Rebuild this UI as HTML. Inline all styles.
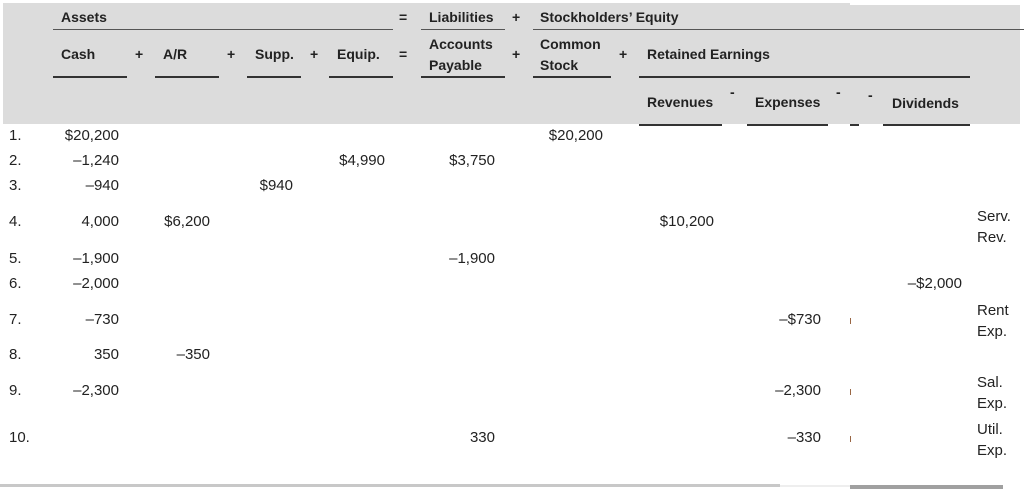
<!DOCTYPE html>
<html><head><style>
body{margin:0;width:1024px;height:493px;background:#fff;position:relative;overflow:hidden;font-family:"Liberation Sans",sans-serif;font-size:14px;color:#222}
.a{position:absolute;white-space:nowrap;line-height:16px}
.b{font-weight:bold;color:#222}
.r{position:absolute;white-space:nowrap;line-height:16px;text-align:right;width:100px;font-size:15px}
.n{font-size:15px}
.l{position:absolute;height:2px;background:#333}
.t{position:absolute;height:1px;background:#555}
</style></head><body>
<div style="position:absolute;left:3px;top:3px;width:847px;height:121px;background:#dcdcdc"></div>
<div style="position:absolute;left:850px;top:5px;width:170px;height:119px;background:#dcdcdc"></div>

<div class="a b" style="left:61px;top:9px">Assets</div>
<div class="a b" style="left:399px;top:9px">=</div>
<div class="a b" style="left:429px;top:9px">Liabilities</div>
<div class="a b" style="left:512px;top:9px">+</div>
<div class="a b" style="left:540px;top:9px">Stockholders’ Equity</div>
<div class="t" style="left:53px;top:29px;width:340px"></div>
<div class="t" style="left:421px;top:29px;width:84px"></div>
<div class="t" style="left:533px;top:29px;width:491px"></div>

<div class="a b" style="left:61px;top:46px">Cash</div>
<div class="a b" style="left:135px;top:46px">+</div>
<div class="a b" style="left:163px;top:46px">A/R</div>
<div class="a b" style="left:227px;top:46px">+</div>
<div class="a b" style="left:255px;top:46px">Supp.</div>
<div class="a b" style="left:310px;top:46px">+</div>
<div class="a b" style="left:337px;top:46px">Equip.</div>
<div class="a b" style="left:399px;top:46px">=</div>
<div class="a b" style="left:429px;top:36px">Accounts</div>
<div class="a b" style="left:429px;top:57px">Payable</div>
<div class="a b" style="left:512px;top:46px">+</div>
<div class="a b" style="left:540px;top:36px">Common</div>
<div class="a b" style="left:540px;top:57px">Stock</div>
<div class="a b" style="left:619px;top:46px">+</div>
<div class="a b" style="left:647px;top:46px">Retained Earnings</div>
<div class="l" style="left:53px;top:76px;width:74px"></div>
<div class="l" style="left:155px;top:76px;width:64px"></div>
<div class="l" style="left:247px;top:76px;width:54px"></div>
<div class="l" style="left:329px;top:76px;width:64px"></div>
<div class="l" style="left:421px;top:76px;width:84px"></div>
<div class="l" style="left:533px;top:76px;width:78px"></div>
<div class="l" style="left:639px;top:76px;width:331px"></div>

<div class="a b" style="left:647px;top:94px">Revenues</div>
<div class="a b" style="left:730px;top:84px">-</div>
<div class="a b" style="left:755px;top:94px">Expenses</div>
<div class="a b" style="left:836px;top:84px">-</div>
<div class="a b" style="left:868px;top:87px">-</div>
<div class="a b" style="left:892px;top:95px">Dividends</div>
<div class="l" style="left:639px;top:124px;width:83px"></div>
<div class="l" style="left:747px;top:124px;width:81px"></div>
<div class="l" style="left:850px;top:124px;width:9px"></div>
<div class="l" style="left:883px;top:124px;width:87px"></div>

<div class="a n" style="left:9px;top:128px">1.</div>
<div class="a n" style="left:9px;top:153px">2.</div>
<div class="a n" style="left:9px;top:178px">3.</div>
<div class="a n" style="left:9px;top:214px">4.</div>
<div class="a n" style="left:9px;top:251px">5.</div>
<div class="a n" style="left:9px;top:276px">6.</div>
<div class="a n" style="left:9px;top:312px">7.</div>
<div class="a n" style="left:9px;top:347px">8.</div>
<div class="a n" style="left:9px;top:383px">9.</div>
<div class="a n" style="left:9px;top:430px">10.</div>

<div class="r" style="left:19px;top:128px">$20,200</div>
<div class="r" style="left:19px;top:153px">–1,240</div>
<div class="r" style="left:19px;top:178px">–940</div>
<div class="r" style="left:19px;top:214px">4,000</div>
<div class="r" style="left:19px;top:251px">–1,900</div>
<div class="r" style="left:19px;top:276px">–2,000</div>
<div class="r" style="left:19px;top:312px">–730</div>
<div class="r" style="left:19px;top:347px">350</div>
<div class="r" style="left:19px;top:383px">–2,300</div>

<div class="r" style="left:110px;top:214px">$6,200</div>
<div class="r" style="left:110px;top:347px">–350</div>
<div class="r" style="left:193px;top:178px">$940</div>
<div class="r" style="left:285px;top:153px">$4,990</div>
<div class="r" style="left:395px;top:153px">$3,750</div>
<div class="r" style="left:395px;top:251px">–1,900</div>
<div class="r" style="left:395px;top:430px">330</div>
<div class="r" style="left:503px;top:128px">$20,200</div>
<div class="r" style="left:614px;top:214px">$10,200</div>
<div class="r" style="left:721px;top:312px">–$730</div>
<div class="r" style="left:721px;top:383px">–2,300</div>
<div class="r" style="left:721px;top:430px">–330</div>
<div class="r" style="left:862px;top:276px">–$2,000</div>

<div style="position:absolute;left:850px;top:318px;width:1px;height:6px;background:#964"></div>
<div style="position:absolute;left:850px;top:389px;width:1px;height:6px;background:#964"></div>
<div style="position:absolute;left:850px;top:436px;width:1px;height:6px;background:#964"></div>

<div class="a n" style="left:977px;top:206px;line-height:21px">Serv.<br>Rev.</div>
<div class="a n" style="left:977px;top:300px;line-height:21px">Rent<br>Exp.</div>
<div class="a n" style="left:977px;top:372px;line-height:21px">Sal.<br>Exp.</div>
<div class="a n" style="left:977px;top:419px;line-height:21px">Util.<br>Exp.</div>

<div style="position:absolute;left:0;top:484px;width:780px;height:3px;background:#c8c8c8"></div>
<div style="position:absolute;left:780px;top:485px;width:70px;height:2px;background:#eee"></div>
<div style="position:absolute;left:850px;top:485px;width:153px;height:4px;background:#a0a0a0"></div>
</body></html>
